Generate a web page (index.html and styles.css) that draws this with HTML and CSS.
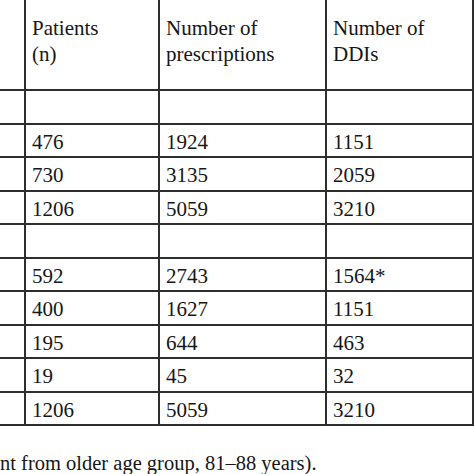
FILE: index.html
```html
<!DOCTYPE html>
<html lang="en">
<head>
<meta charset="utf-8">
<title>Table</title>
<link rel="stylesheet" href="styles.css">
</head>
<body>
<div class="page">
  <table class="grid">
    <colgroup>
      <col class="c-label">
      <col class="c-pat">
      <col class="c-rx">
      <col class="c-ddi">
    </colgroup>
    <thead>
      <tr>
        <th></th>
        <th>Patients<br>(n)</th>
        <th>Number of<br>prescriptions</th>
        <th>Number of<br>DDIs</th>
      </tr>
    </thead>
    <tbody>
      <tr><td></td><td></td><td></td><td></td></tr>
      <tr><td></td><td>476</td><td>1924</td><td>1151</td></tr>
      <tr><td></td><td>730</td><td>3135</td><td>2059</td></tr>
      <tr><td></td><td>1206</td><td>5059</td><td>3210</td></tr>
      <tr><td></td><td></td><td></td><td></td></tr>
      <tr><td></td><td>592</td><td>2743</td><td>1564*</td></tr>
      <tr><td></td><td>400</td><td>1627</td><td>1151</td></tr>
      <tr><td></td><td>195</td><td>644</td><td>463</td></tr>
      <tr><td></td><td>19</td><td>45</td><td>32</td></tr>
      <tr><td></td><td>1206</td><td>5059</td><td>3210</td></tr>
    </tbody>
  </table>
  <p class="note">nt from older age group, 81–88 years).</p>
</div>
</body>
</html>
```
FILE: styles.css
```css
html, body {
  margin: 0;
  padding: 0;
  background: #ffffff;
}
body {
  font-family: "Liberation Serif", "Times New Roman", serif;
  font-size: 21px;
  line-height: 26px;
  color: #161616;
  overflow: hidden;
}
.page {
  width: 474px;
  height: 474px;
  overflow: hidden;
}
.grid {
  border-collapse: collapse;
  table-layout: fixed;
  width: 473px;
}
.c-label { width: 25px; }
.c-pat { width: 134px; }
.c-rx { width: 167px; }
.c-ddi { width: 147px; }

.grid th,
.grid td {
  border: 2px solid #2e2e2e;
  padding: 4px 0 0 6px;
  vertical-align: top;
  text-align: left;
  font-weight: normal;
  white-space: nowrap;
}
.grid th {
  border-top: none;
  padding-top: 15px;
}
.grid th:first-child,
.grid td:first-child {
  border-left: none;
}
.grid thead tr { height: 90px; }
.grid tbody tr { height: 33.5px; }

.note {
  margin: 24px 0 0 0;
  white-space: nowrap;
  font-size: 20.5px;
}
```
